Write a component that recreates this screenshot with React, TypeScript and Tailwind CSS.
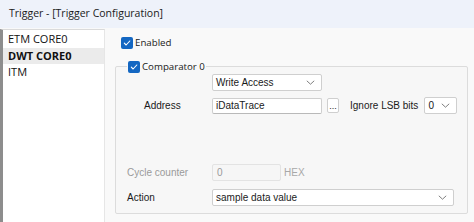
import React from "react";

function Check({ className = "" }: { className?: string }) {
  return (
    <span
      className={`inline-flex h-[12px] w-[12px] shrink-0 items-center justify-center rounded-[2px] bg-[#1467c2] ${className}`}
    >
      <svg width="8" height="8" viewBox="0 0 8 8" fill="none">
        <path d="M1.3 4.2 3.1 6 6.8 2" stroke="white" strokeWidth="1.1" strokeLinecap="round" strokeLinejoin="round" />
      </svg>
    </span>
  );
}

function Chevron() {
  return (
    <svg width="9" height="5" viewBox="0 0 9 5" fill="none" className="shrink-0">
      <path d="M0.8 0.8 4.5 4.2 8.2 0.8" stroke="#707070" strokeWidth="0.9" />
    </svg>
  );
}

function Select({ value, className = "" }: { value: string; className?: string }) {
  return (
    <div
      className={`flex h-[17px] items-center justify-between rounded-[2px] border border-[#cfcfcf] bg-white pl-[3px] pr-[6px] text-[#1a1a1a] ${className}`}
    >
      <span>{value}</span>
      <Chevron />
    </div>
  );
}

const lists = [
  { name: "ETM CORE0", active: false },
  { name: "DWT CORE0", active: true },
  { name: "ITM", active: false },
];

export default function App() {
  return (
    <div className="flex h-[222px] w-[474px] flex-col overflow-hidden bg-[#f9f9f9] font-['Open_Sans',sans-serif] text-[#1a1a1a]">
      <div className="flex h-[28px] shrink-0 items-center bg-[#eef2fa] pl-[9px] text-[10.5px]">
        Trigger - [Trigger Configuration]
      </div>
      <div className="mt-[1px] flex min-h-0 flex-1">
        <ul className="w-[105px] shrink-0 border-l-[3px] border-t border-r border-l-[#8d8d8d] border-t-[#dadada] border-r-[#e6e6e6] bg-white pt-[1px] text-[11px] text-[#111]">
          {lists.map((l) => (
            <li
              key={l.name}
              className={`flex h-[16.5px] items-center pl-[5px] ${l.active ? "bg-[#ebebeb] font-bold" : ""}`}
            >
              {l.name}
            </li>
          ))}
        </ul>
        <div className="flex flex-1 flex-col pt-[7px] text-[9.7px]">
          <label className="ml-[16px] flex items-center gap-[2px]">
            <Check />
            <span>Enabled</span>
          </label>
          <fieldset className="mt-[9px] mb-[8px] ml-[10px] mr-[6px] flex-1 rounded-[2px] border border-[#dcdcdc] bg-[#f7f7f7] font-['Liberation_Sans',sans-serif] text-[10px]">
            <legend className="ml-[11px] flex items-center gap-[2px] px-[1px] font-['Open_Sans',sans-serif] text-[9.7px]">
              <Check />
              <span>Comparator 0</span>
            </legend>
            <div className="flex flex-col pl-[96px]">
              <Select value="Write Access" className="w-[110px]" />
            </div>
            <div className="mt-[6px] flex items-center">
              <span className="w-[96px] pl-[28px]">Address</span>
              <div className="flex h-[16px] w-[110px] items-center rounded-[2px] border border-[#cfcfcf] border-b-[#b9b9b9] bg-white pl-[3px]">
                iDataTrace
              </div>
              <button className="ml-[5px] flex h-[15px] w-[12px] items-end justify-center rounded-[2px] border border-[#cfcfcf] bg-white pb-[1px] text-[9px] leading-none">
                ...
              </button>
              <span className="ml-[11px]">Ignore LSB bits</span>
              <Select value="0" className="ml-[6px] h-[16px] w-[33px]" />
            </div>
            <div className="mt-[50px] flex items-center">
              <span className="w-[96px] pl-[11px] text-[#9a9a9a]">Cycle counter</span>
              <div className="flex h-[17px] w-[69px] items-center rounded-[2px] border border-[#e3e3e3] bg-[#f6f6f6] pl-[4px] text-[#9a9a9a]">
                0
              </div>
              <span className="ml-[3px] text-[#a8a8a8]">HEX</span>
            </div>
            <div className="mt-[8px] flex items-center">
              <span className="w-[96px] pl-[11px]">Action</span>
              <Select value="sample data value" className="h-[17px] w-[242px]" />
            </div>
          </fieldset>
        </div>
      </div>
    </div>
  );
}
